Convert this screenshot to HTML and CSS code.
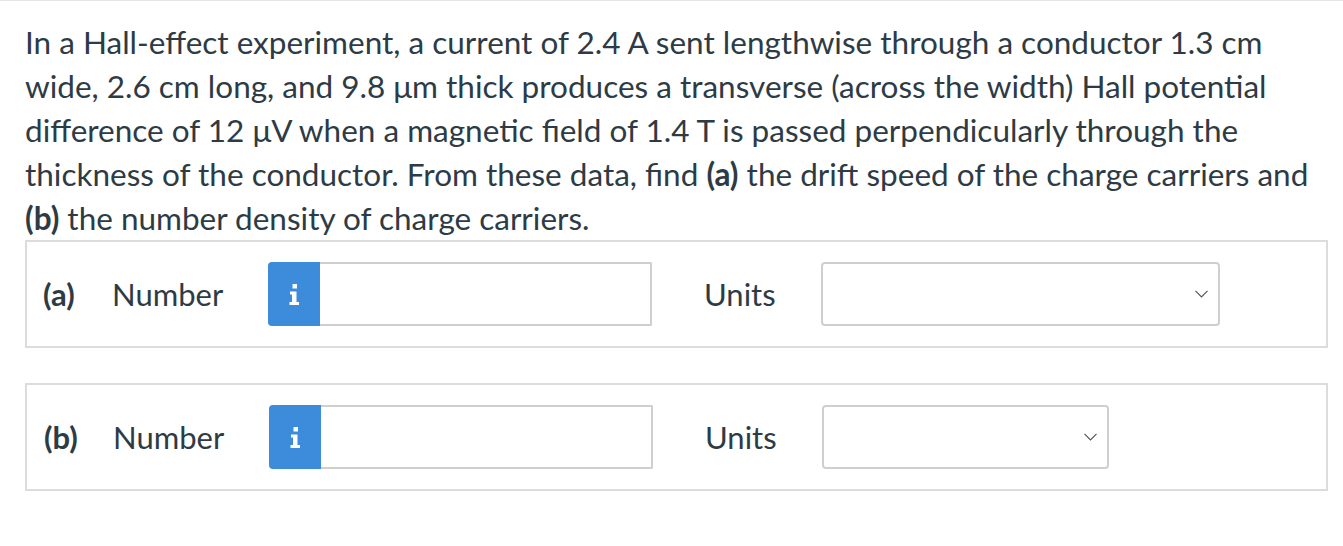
FILE: index.html
```html
<!DOCTYPE html>
<html>
<head>
<meta charset="utf-8">
<link rel="stylesheet" href="styles.css">
</head>
<body>
<div class="page">
  <p class="question">In a Hall-effect experiment, a current of 2.4 A sent lengthwise through a conductor 1.3 cm wide, 2.6 cm long, and 9.8 μm thick produces a transverse (across the width) Hall potential difference of 12 μV when a magnetic field of 1.4 T is passed perpendicularly through the thickness of the conductor. From these data, find <b>(a)</b> the drift speed of the charge carriers and <b>(b)</b> the number density of charge carriers.</p>

  <div class="answer">
    <span class="part">(a)</span>
    <span class="lbl">Number</span>
    <span class="info"><svg width="11" height="21" viewBox="0 0 11 21"><path d="M3.5 0h4.5v4.5h-4.5z M1 7.5h6.5v10.5h2.5v3h-9.5v-3h2.5v-7.5h-2z" fill="#fff"/></svg></span>
    <span class="field"></span>
    <span class="units">Units</span>
    <span class="select sel-a"><svg class="chev" width="13" height="8" viewBox="0 0 13 8"><path d="M0.5 0.8L6.5 6.8L12.5 0.8" fill="none" stroke="#555" stroke-width="1.2"/></svg></span>
  </div>

  <div class="answer second">
    <span class="part">(b)</span>
    <span class="lbl">Number</span>
    <span class="info"><svg width="11" height="21" viewBox="0 0 11 21"><path d="M3.5 0h4.5v4.5h-4.5z M1 7.5h6.5v10.5h2.5v3h-9.5v-3h2.5v-7.5h-2z" fill="#fff"/></svg></span>
    <span class="field"></span>
    <span class="units">Units</span>
    <span class="select sel-b"><svg class="chev" width="13" height="8" viewBox="0 0 13 8"><path d="M0.5 0.8L6.5 6.8L12.5 0.8" fill="none" stroke="#555" stroke-width="1.2"/></svg></span>
  </div>
</div>
</body>
</html>
```

FILE: styles.css
```css
html, body {
  margin: 0;
  padding: 0;
  background: #fff;
}
body {
  font-family: Lato, "Open Sans", sans-serif;
  color: #2d3b45;
  border-top: 1px solid #e6e6e6;
}
.page {
  padding: 19px 15px 0 25px;
}
.question {
  margin: 0 11px 0 0;
  font-size: 31.5px;
  line-height: 44px;
}
.question b {
  font-weight: 700;
}
.answer {
  display: flex;
  align-items: center;
  border: 2px solid #dcdcdc;
  padding: 20px 16px;
  font-size: 31px;
}
.answer.second {
  margin-top: 35px;
  padding-left: 17px;
}
.part {
  font-weight: 700;
  width: 69px;
}
.lbl {
  width: 156px;
}
.info {
  width: 52px;
  height: 64px;
  background: #3d8bdb;
  border-radius: 4px 0 0 4px;
  display: flex;
  align-items: center;
  justify-content: center;
  box-sizing: border-box;
}
.field {
  width: 332px;
  height: 64px;
  box-sizing: border-box;
  border: 2px solid #cfcfcf;
  border-left: none;
  border-radius: 0 2px 2px 0;
}
.units {
  margin-left: 52px;
  width: 117px;
}
.select {
  height: 64px;
  box-sizing: border-box;
  border: 2px solid #cfcfcf;
  border-radius: 4px;
  display: flex;
  align-items: center;
  justify-content: flex-end;
  padding-right: 10px;
}
.sel-a { width: 399px; }
.sel-b { width: 287px; }
```
